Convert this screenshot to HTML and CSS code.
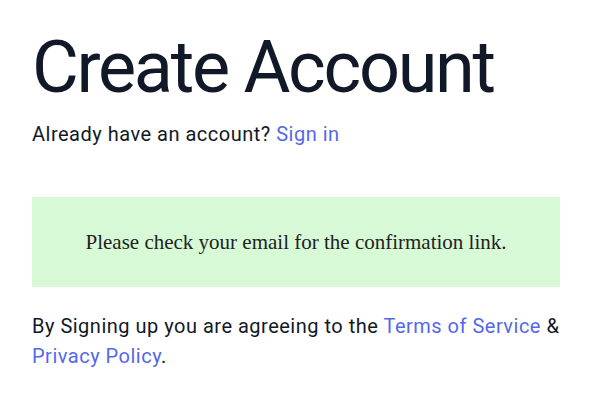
FILE: index.html
```html
<!DOCTYPE html>
<html>
<head>
<meta charset="utf-8">
<link rel="stylesheet" href="styles.css">
</head>
<body>
<main class="page">
  <h1 class="title">Create Account</h1>
  <p class="lead">Already have an account? <a class="link" href="#">Sign in</a></p>
  <div class="notice">Please check your email for the confirmation link.</div>
  <p class="terms">By Signing up you are agreeing to the <a class="link" href="#">Terms of Service</a> &amp; <a class="link" href="#">Privacy Policy</a>.</p>
</main>
</body>
</html>
```

FILE: styles.css
```css
html, body {
  margin: 0;
  padding: 0;
  background: #ffffff;
}
.page {
  width: 528px;
  padding: 0 0 0 32px;
  font-family: "Roboto", "Noto Sans", sans-serif;
  color: #111827;
}
.title {
  margin: 0;
  padding-top: 24px;
  font-size: 72px;
  font-weight: 400;
  line-height: 88px;
  letter-spacing: -2.3px;
}
.lead {
  margin: 7px 0 0;
  font-size: 20px;
  line-height: 30px;
  letter-spacing: 0.5px;
}
.link {
  color: #5468ea;
  text-decoration: none;
}
.notice {
  margin-top: 48px;
  height: 90px;
  background: #d7f9d6;
  display: flex;
  align-items: center;
  justify-content: center;
  font-family: "Liberation Serif", serif;
  font-size: 21px;
  letter-spacing: 0;
  color: #222222;
}
.terms {
  margin: 24px 0 0;
  font-size: 20px;
  line-height: 30px;
  letter-spacing: 0.5px;
}
```
